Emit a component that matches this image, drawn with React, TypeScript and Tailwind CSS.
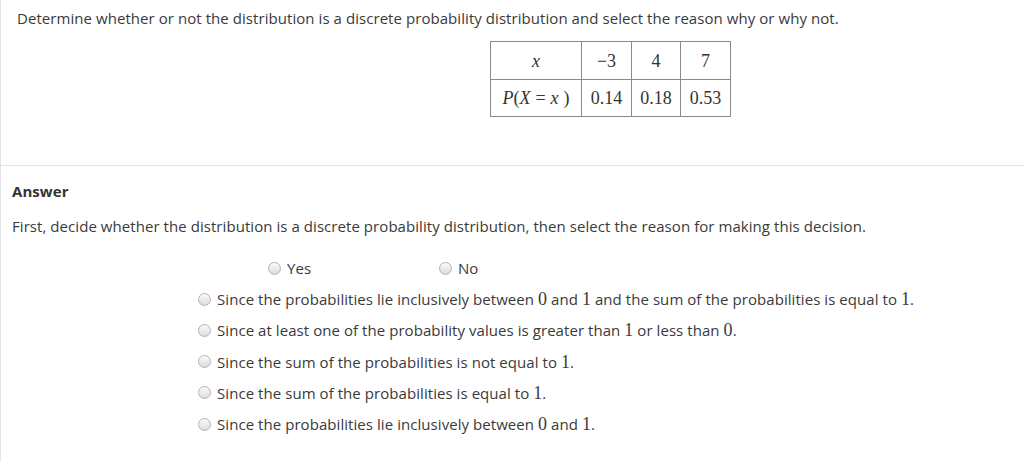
import React from "react";

const Radio: React.FC = () => (
  <span className="inline-block w-[13px] h-[13px] rounded-full border border-[#b3b3b3] bg-gradient-to-b from-[#fbfbfb] to-[#dcdcdc] shrink-0"></span>
);

const M: React.FC<{ children: React.ReactNode }> = ({ children }) => (
  <span className="font-['Liberation_Serif',serif] text-[18px]">{children}</span>
);

const App: React.FC = () => {
  const reasons: React.ReactNode[] = [
    <>
      Since the probabilities lie inclusively between <M>0</M> and <M>1</M> and the sum of the probabilities is equal to <M>1</M>.
    </>,
    <>
      Since at least one of the probability values is greater than <M>1</M> or less than <M>0</M>.
    </>,
    <>
      Since the sum of the probabilities is not equal to <M>1</M>.
    </>,
    <>
      Since the sum of the probabilities is equal to <M>1</M>.
    </>,
    <>
      Since the probabilities lie inclusively between <M>0</M> and <M>1</M>.
    </>,
  ];

  const cell = "border border-[#8a8a8a] text-center px-[6px]";

  return (
    <div className="w-full h-[461px] bg-white border-l border-[#e3e3e3] font-['Open_Sans',sans-serif] text-[15px] leading-[20px] tracking-[0.06px] text-[#3a3a3a]">
      {/* Question */}
      <div className="h-[166px] border-b border-[#e3e3e3] pl-[16px] pt-[8px]">
        <p>
          Determine whether or not the distribution is a discrete probability distribution and select the reason why or why not.
        </p>
        <table className="ml-[473px] mt-[13px] border-collapse font-['Liberation_Serif',serif] text-[18px] tracking-normal text-[#333]">
          <tbody>
            <tr className="h-[38px]">
              <td className={`${cell} w-[91px]`}>
                <i>x</i>
              </td>
              <td className={`${cell} w-[50px]`}>−3</td>
              <td className={`${cell} w-[49px]`}>4</td>
              <td className={`${cell} w-[50px]`}>7</td>
            </tr>
            <tr className="h-[37px]">
              <td className={`${cell} px-[5px] whitespace-nowrap`}>
                <i>P</i>(<i>X</i>
                <span className="mx-[5px]">=</span>
                <i>x</i>
                <span className="ml-[5px]">)</span>
              </td>
              <td className={cell}>0.14</td>
              <td className={cell}>0.18</td>
              <td className={cell}>0.53</td>
            </tr>
          </tbody>
        </table>
      </div>

      {/* Answer */}
      <div className="pl-[11px] pt-[15px]">
        <h3 className="font-bold text-[#333]">Answer</h3>
        <p className="mt-[15px]">
          First, decide whether the distribution is a discrete probability distribution, then select the reason for making this decision.
        </p>

        <div className="flex items-center ml-[256px] mt-[22px] h-[20px]">
          <label className="flex items-center gap-[6px] w-[171px]">
            <Radio />
            <span>Yes</span>
          </label>
          <label className="flex items-center gap-[6px]">
            <Radio />
            <span>No</span>
          </label>
        </div>

        <div className="ml-[186px] mt-[11px] flex flex-col gap-[11.3px]">
          {reasons.map((r, i) => (
            <label key={i} className="flex items-center gap-[6px] h-[20px]">
              <Radio />
              <span>{r}</span>
            </label>
          ))}
        </div>
      </div>
    </div>
  );
};

export default App;
